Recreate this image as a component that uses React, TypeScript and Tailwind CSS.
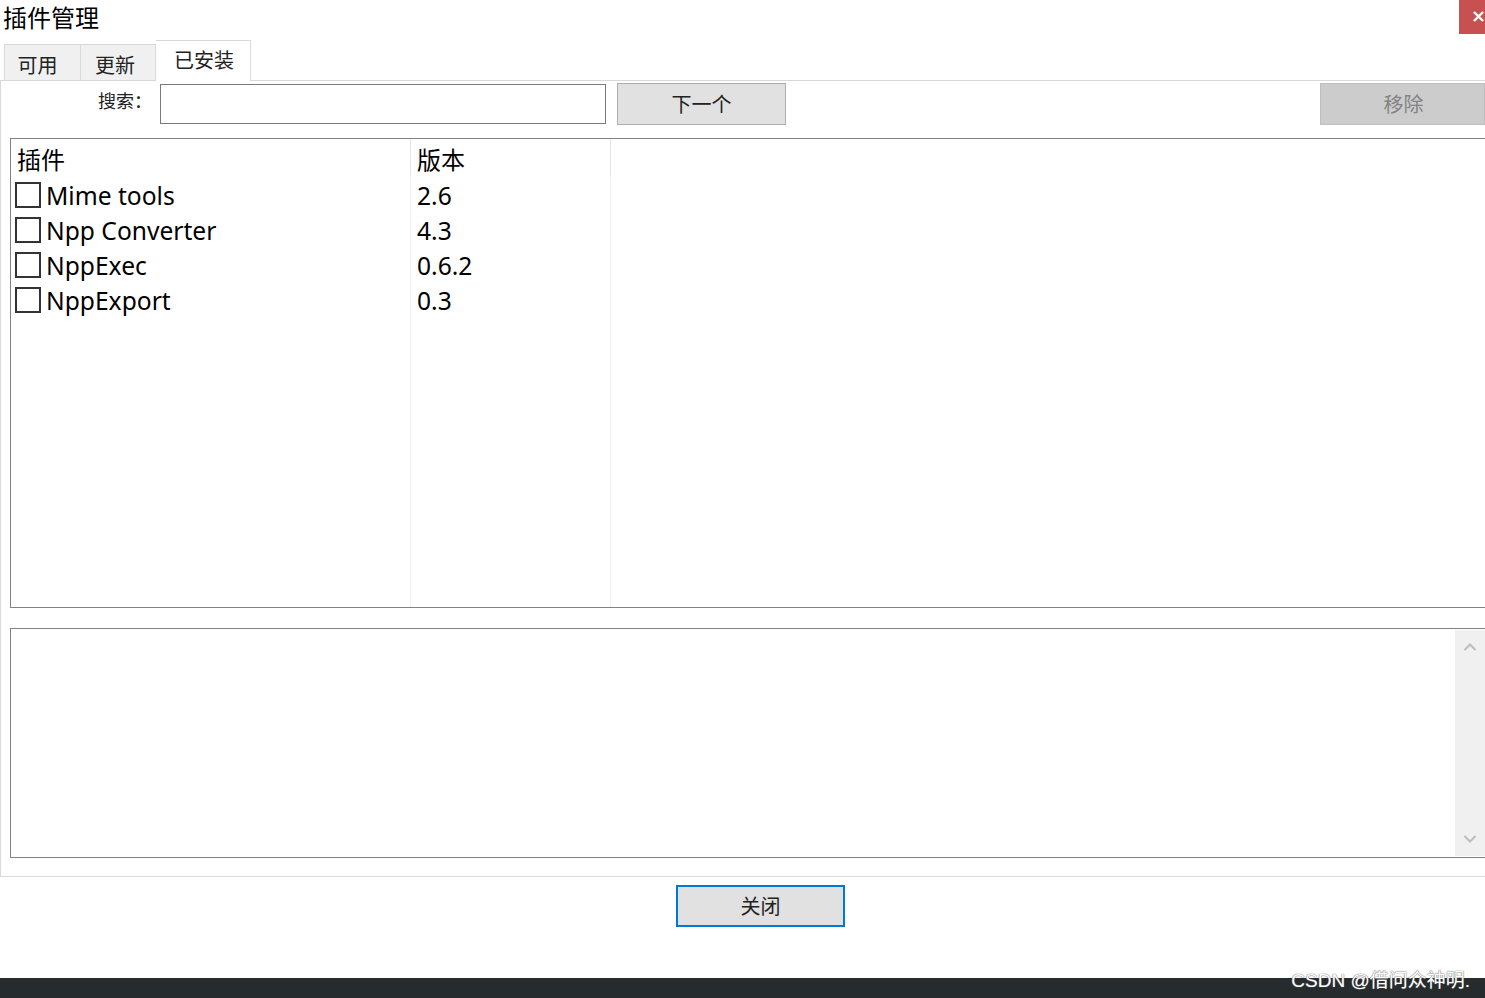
import React from "react";

const ui = { fontFamily: '"Noto Sans CJK SC", "Noto Sans", sans-serif' };
const listFont = { fontFamily: '"Noto Sans", "Noto Sans CJK SC", sans-serif' };

const plugins = [
  { name: "Mime tools", ver: "2.6" },
  { name: "Npp Converter", ver: "4.3" },
  { name: "NppExec", ver: "0.6.2" },
  { name: "NppExport", ver: "0.3" },
];

export default function App() {
  return (
    <div className="relative w-[1485px] h-[998px] overflow-hidden bg-white flex flex-col text-[#111]" style={ui}>
      {/* title bar */}
      <div className="relative h-[40px] flex items-start">
        <div className="pl-[3px] text-[24px] leading-[34px] text-black">插件管理</div>
        <div className="absolute right-0 top-0 w-[26px] h-[34px] bg-[#c75050] flex items-center justify-end overflow-hidden">
          <span className="text-white text-[18px] leading-none font-bold -mr-[1px] mb-[3px]" style={{ fontFamily: '"DejaVu Sans", sans-serif' }}>×</span>
        </div>
      </div>

      {/* tabs */}
      <div className="relative z-10 h-[40px] flex items-end pl-[4px]">
        <div className="w-[77px] h-[36px] bg-[#f0f0f0] border border-[#d9d9d9] border-b-0 flex items-center justify-center pt-[4px] pr-[10px] text-[20px] text-[#222]">可用</div>
        <div className="w-[75px] h-[36px] bg-[#f0f0f0] border border-l-0 border-[#d9d9d9] border-b-0 flex items-center justify-center pt-[4px] pr-[6px] text-[20px] text-[#222]">更新</div>
        <div className="w-[95px] h-[41px] -mb-px bg-white border border-l-0 border-[#d9d9d9] border-b-0 flex items-center justify-center pb-[2px] pl-[2px] text-[20px] text-[#222]">已安装</div>
      </div>

      {/* panel */}
      <div className="h-[797px] border border-r-0 border-[#d9d9d9] flex flex-col">
        {/* search row */}
        <div className="h-[46px] flex items-center">
          <div className="w-[151px] text-right text-[18px] text-[#222] -mt-[7px] whitespace-nowrap">搜索：</div>
          <div className="ml-[8px] w-[446px] h-[40px] border border-[#7a7a7a] bg-white" />
          <div className="ml-[11px] w-[169px] h-[42px] bg-[#e1e1e1] border border-[#adadad] flex items-center justify-center text-[20px] text-[#222]">下一个</div>
          <div className="flex-1" />
          <div className="w-[165px] h-[42px] bg-[#cccccc] border border-[#bfbfbf] flex items-center justify-center pl-[2px] text-[20px] text-[#838383] shrink-0">移除</div>
        </div>

        {/* list */}
        <div className="mt-[11px] ml-[9px] w-[1476px] h-[470px] border border-[#828282] flex shrink-0" style={listFont}>
          <div className="w-[400px] h-full border-r border-[#eef2f8] flex flex-col">
            <div className="h-[38px] border-r border-[#e5e5e5] -mr-px flex items-center pl-[6px] pt-[2px] text-[24px] text-black" style={ui}>插件</div>
            {plugins.map((p) => (
              <div key={p.name} className="h-[35px] flex items-center pl-[4px]">
                <div className="w-[26px] h-[26px] border-2 border-[#333] bg-white shrink-0" />
                <span className="ml-[5px] mt-[3px] text-[24.6px] leading-none text-black whitespace-nowrap">{p.name}</span>
              </div>
            ))}
          </div>
          <div className="w-[200px] h-full border-r border-[#eef2f8] flex flex-col">
            <div className="h-[38px] border-r border-[#e5e5e5] -mr-px flex items-center pl-[6px] pt-[2px] text-[24px] text-black" style={ui}>版本</div>
            {plugins.map((p) => (
              <div key={p.name} className="h-[35px] flex items-center pl-[6px]">
                <span className="mt-[3px] text-[24.6px] leading-none text-black">{p.ver}</span>
              </div>
            ))}
          </div>
          <div className="flex-1" />
        </div>

        {/* description box */}
        <div className="mt-[20px] ml-[9px] w-[1476px] h-[230px] border border-[#828282] flex shrink-0">
          <div className="flex-1" />
          <div className="w-[30px] my-[1px] bg-[#f0f0f0] flex flex-col items-center justify-between py-[12px]">
            <svg width="14" height="10" viewBox="0 0 14 10">
              <path d="M1.5 8 L7 2.5 L12.5 8" fill="none" stroke="#bdbdbd" strokeWidth="2" />
            </svg>
            <svg width="14" height="10" viewBox="0 0 14 10">
              <path d="M1.5 2 L7 7.5 L12.5 2" fill="none" stroke="#bdbdbd" strokeWidth="2" />
            </svg>
          </div>
        </div>
      </div>

      {/* close button */}
      <div className="mt-[8px] pl-[676px]">
        <div className="w-[169px] h-[42px] bg-[#e1e1e1] border-2 border-[#0078d7] flex items-center justify-center text-[20px] text-[#222]">关闭</div>
      </div>

      <div className="flex-1" />
      <div className="h-[20px] bg-[#262b2e]" />

      <div
        className="absolute right-[15px] bottom-[8px] text-[19px] text-white leading-none"
        style={{ fontFamily: '"Liberation Sans", "Noto Sans CJK SC", sans-serif', textShadow: "0 0 1px #666, 0 0 1px #666" }}
      >
        CSDN @借问众神明.
      </div>
    </div>
  );
}
